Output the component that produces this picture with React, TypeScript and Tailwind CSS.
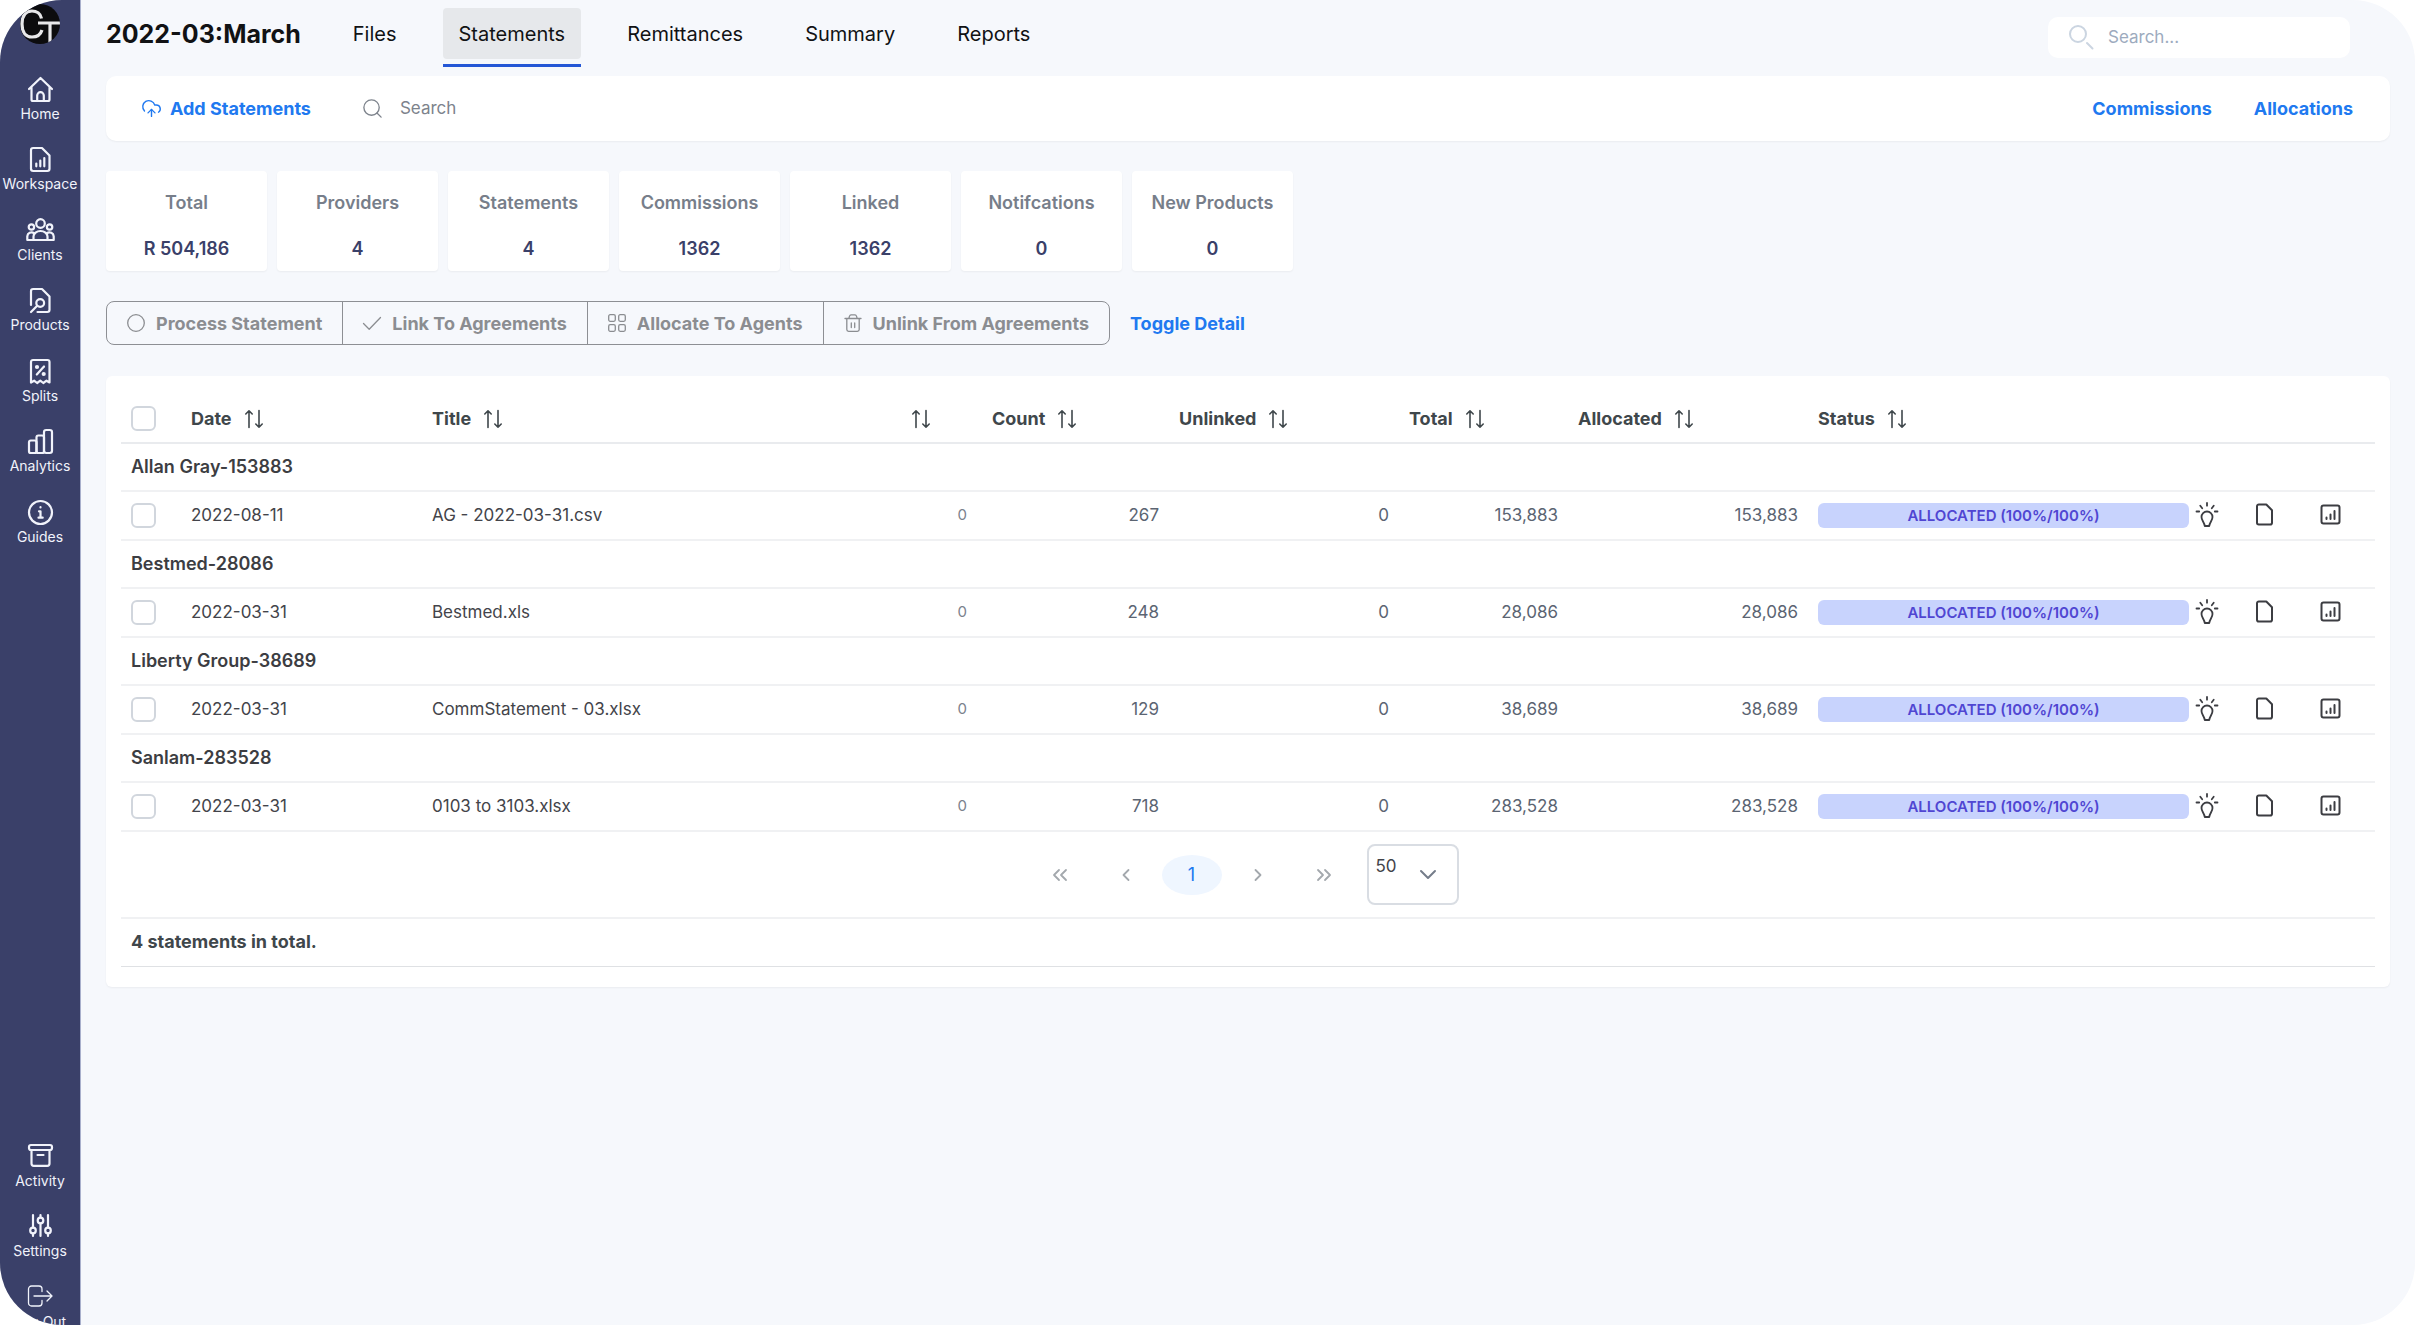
import React from 'react';
import { CloudUpload, Search } from 'lucide-react';

const tabs = ['Files', 'Statements', 'Remittances', 'Summary', 'Reports'];

const stats = [
  { label: 'Total', value: 'R 504,186' },
  { label: 'Providers', value: '4' },
  { label: 'Statements', value: '4' },
  { label: 'Commissions', value: '1362' },
  { label: 'Linked', value: '1362' },
  { label: 'Notifcations', value: '0' },
  { label: 'New Products', value: '0' },
];

const statements = [
  { group: 'Allan Gray-153883', date: '2022-08-11', title: 'AG - 2022-03-31.csv', notes: 0, count: 267, unlinked: 0, total: '153,883' },
  { group: 'Bestmed-28086', date: '2022-03-31', title: 'Bestmed.xls', notes: 0, count: 248, unlinked: 0, total: '28,086' },
  { group: 'Liberty Group-38689', date: '2022-03-31', title: 'CommStatement - 03.xlsx', notes: 0, count: 129, unlinked: 0, total: '38,689' },
  { group: 'Sanlam-283528', date: '2022-03-31', title: '0103 to 3103.xlsx', notes: 0, count: 718, unlinked: 0, total: '283,528' },
];

const Icon: React.FC<{ className: string; box: string; stroke?: number; children: React.ReactNode }> = ({
  className,
  box,
  stroke = 2,
  children,
}) => (
  <svg
    className={`shrink-0 overflow-visible ${className}`}
    viewBox={box}
    fill="none"
    stroke="currentColor"
    strokeWidth={stroke}
    strokeLinecap="round"
    strokeLinejoin="round"
    aria-hidden="true"
  >
    {children}
  </svg>
);

const mainLinks = [
  {
    label: 'Home',
    icon: <path d="M1 12 12.5 1 24 12M3.5 10v12.5a1.5 1.5 0 0 0 1.5 1.5h15a1.5 1.5 0 0 0 1.5-1.5V10M9.2 24v-5.5a3.3 3.3 0 0 1 6.6 0V24" />,
  },
  {
    label: 'Workspace',
    icon: (
      <>
        <path d="M5.2 1H14l7.5 7.5v13.3A2.2 2.2 0 0 1 19.3 24H5.2A2.2 2.2 0 0 1 3 21.8V3.2A2.2 2.2 0 0 1 5.2 1Z" />
        <path d="M8.3 16.5v2.8M12.3 13.5v5.8M16.3 11v8.3" />
      </>
    ),
  },
  {
    label: 'Clients',
    icon: (
      <>
        <circle cx="12.5" cy="5.5" r="4.3" />
        <circle cx="3.4" cy="9" r="2.7" />
        <circle cx="21.6" cy="9" r="2.7" />
        <path d="M5.5 22v-3.5a7 5.5 0 0 1 14 0V22ZM5.5 22h-6.2v-3.6a4.2 4.2 0 0 1 6.7-3.2M19.5 22h6.2v-3.6a4.2 4.2 0 0 0-6.7-3.2" />
      </>
    ),
  },
  {
    label: 'Products',
    icon: (
      <>
        <path d="M3 17V3.2A2.2 2.2 0 0 1 5.2 1H14l7.5 7.5v13.3a2.2 2.2 0 0 1-2.2 2.2H9.5" />
        <circle cx="12.2" cy="15" r="3.9" />
        <path d="M9.2 17.8 3 24" />
      </>
    ),
  },
  {
    label: 'Splits',
    icon: (
      <>
        <path d="M3 23.5V3a2 2 0 0 1 2-2h14.5a2 2 0 0 1 2 2v20.5l-3-1.8-3.2 2.3-3-2.3-3.2 2.3-3-2.3Z" />
        <path d="M16 7.5 8.8 15.5" />
        <circle cx="9" cy="8" r="1" />
        <circle cx="15.7" cy="15" r="1" />
      </>
    ),
  },
  {
    label: 'Analytics',
    icon: (
      <>
        <rect x="1" y="11.5" width="7.5" height="12.5" rx="1.8" />
        <rect x="8.5" y="6.5" width="7.5" height="17.5" rx="1.8" />
        <rect x="16" y="1" width="8" height="23" rx="2.2" />
      </>
    ),
  },
  {
    label: 'Guides',
    icon: (
      <>
        <circle cx="12.5" cy="12.5" r="11.5" />
        <path d="M11 11.3h1.5v6.2M10.5 17.7h4.2M12.5 7.2v.3" />
      </>
    ),
  },
];

const bottomLinks = [
  {
    label: 'Activity',
    stroke: 2.2,
    icon: (
      <>
        <rect x="1" y="1" width="23" height="5" rx="2" />
        <path d="M3.5 6v13.5a2.3 2.3 0 0 0 2.3 2.3h13.4a2.3 2.3 0 0 0 2.3-2.3V6M9.5 11h6" />
      </>
    ),
  },
  {
    label: 'Settings',
    stroke: 2.2,
    icon: (
      <>
        <path d="M5 1v12.5M5 19.5V22M12.5 1v2.3M12.5 9.5V22M20 1v12.5M20 19.5V22" />
        <circle cx="5" cy="16.5" r="2.8" />
        <circle cx="12.5" cy="6.5" r="2.8" />
        <circle cx="20" cy="16.5" r="2.8" />
      </>
    ),
  },
  {
    label: 'Log Out',
    stroke: 1.3,
    icon: <path d="M14 6.5V4a3 3 0 0 0-3-3H3.5a3 3 0 0 0-3 3v14a3 3 0 0 0 3 3H11a3 3 0 0 0 3-3v-2.5M6 11h17.5M19 6l5 5-5 5" />,
  },
];

const SideLink: React.FC<{ label: string; icon: React.ReactNode; stroke?: number }> = ({ label, icon, stroke = 2.2 }) => (
  <a href="#" className="flex-1 flex flex-col items-center gap-[2px]">
    <Icon className="size-[25px]" box="0 0 25 25" stroke={stroke}>
      {icon}
    </Icon>
    <span className="text-[14px] leading-5 whitespace-nowrap">{label}</span>
  </a>
);

const Sidebar: React.FC = () => (
  <aside className="w-[81px] shrink-0 flex flex-col bg-[#3a4069] text-[#f1f3fb] border-r border-[#a9b0cc] pt-1">
    <svg className="size-10 shrink-0 mx-auto" viewBox="0 0 40 40" fill="none" stroke="#e8e8ea" strokeWidth="3.2" role="img" aria-label="CT">
      <clipPath id="badge">
        <circle cx="20" cy="20" r="20" />
      </clipPath>
      <g clipPath="url(#badge)">
        <rect width="40" height="40" fill="#0c0c0e" stroke="none" />
        <path d="M21.5 14.5C20.5 9.500 16.5 7 12 7 5.500 7 2 12 2 20s3.500 13 10 13c4.500 0 8.500-2 10-7" />
        <path d="M18 19h22M30 19v21" />
      </g>
    </svg>
    <nav className="h-[493px] shrink-0 flex flex-col mt-[33px]">
      {mainLinks.map((link) => (
        <SideLink key={link.label} {...link} />
      ))}
    </nav>
    {/* the last entry runs past the bottom edge */}
    <nav className="h-[211px] shrink-0 flex flex-col mt-auto -mb-[30px]">
      {bottomLinks.map((link) => (
        <SideLink key={link.label} {...link} />
      ))}
    </nav>
  </aside>
);

const Header: React.FC = () => (
  <header className="h-[76px] flex items-start justify-between pt-2">
    <div className="flex gap-9">
      <h1 className="text-[25px] leading-[53px] font-bold text-[#111214]">2022-03:March</h1>
      <nav className="flex gap-[30px]">
        {tabs.map((tab) => (
          <a
            key={tab}
            href="#"
            className={`pb-[5px] border-b-[3px] ${tab === 'Statements' ? 'border-[#2457d6]' : 'border-transparent'}`}
          >
            <span
              className={`block h-[51px] px-4 rounded text-[20px] leading-[53px] text-[#111214] ${
                tab === 'Statements' ? 'bg-[#e6e8eb]' : ''
              }`}
            >
              {tab}
            </span>
          </a>
        ))}
      </nav>
    </div>
    <label className="w-[302px] h-[41px] mt-[9px] mr-10 pl-[21px] flex items-center gap-[14px] bg-white rounded-[10px]">
      <Icon className="size-[25px] text-[#cbd5e1]" box="0 0 25 25">
        <circle cx="9" cy="9" r="8" />
        <path d="m18 18 5.5 5.5" />
      </Icon>
      <input
        type="text"
        aria-label="Search everything"
        placeholder="Search..."
        className="w-full min-w-0 text-[17px] outline-none placeholder:text-[#9dabbe]"
      />
    </label>
  </header>
);

const Toolbar: React.FC = () => (
  <div className="h-[65px] pl-[35px] pr-[37px] flex items-center justify-between bg-white rounded-[10px] shadow-xs">
    <div className="flex items-center gap-[50px]">
      <button className="flex items-center gap-2 text-[18px] font-bold text-[#2079f0]">
        <CloudUpload size={21} strokeWidth={1.6} />
        Add Statements
      </button>
      <label className="flex items-center gap-4 text-[#7d838c]">
        <Search size={23} strokeWidth={1.4} />
        <input
          type="text"
          aria-label="Search statements"
          placeholder="Search"
          className="w-60 text-[17px] outline-none placeholder:text-[#7d838c]"
        />
      </label>
    </div>
    <div className="flex gap-[42px] text-[18px] font-bold text-[#2079f0]">
      <a href="#">Commissions</a>
      <a href="#">Allocations</a>
    </div>
  </div>
);

const Stats: React.FC = () => (
  <dl className="flex gap-[10px] mt-[30px]">
    {stats.map((stat) => (
      <div
        key={stat.label}
        className="w-[161px] h-[100px] flex flex-col items-center gap-[22px] pt-5 bg-white rounded shadow-xs text-[18px] leading-6 font-semibold"
      >
        <dt className="text-[#777e8a]">{stat.label}</dt>
        <dd className="text-[#3a4069]">{stat.value}</dd>
      </div>
    ))}
  </dl>
);

const actions = [
  { label: 'Process Statement', icon: <circle cx="9" cy="9" r="8.3" /> },
  { label: 'Link To Agreements', icon: <path d="m.5 9.5 5.7 5.7L17.5 3.5" /> },
  {
    label: 'Allocate To Agents',
    icon: (
      <>
        <rect x=".7" y=".7" width="6.6" height="6.6" rx="1.5" />
        <rect x="10.7" y=".7" width="6.6" height="6.6" rx="1.5" />
        <rect x=".7" y="10.7" width="6.6" height="6.6" rx="1.5" />
        <rect x="10.7" y="10.7" width="6.6" height="6.6" rx="1.5" />
      </>
    ),
  },
  {
    label: 'Unlink From Agreements',
    icon: <path d="M1 4.5h16M2.8 4.5v11a1.8 1.8 0 0 0 1.8 1.8h8.8a1.8 1.8 0 0 0 1.8-1.8v-11M4.8 4.5l.8-2.6A1.5 1.5 0 0 1 7 .8h4a1.5 1.5 0 0 1 1.4 1.1l.8 2.6M7.3 9v4.5M10.7 9v4.5" />,
  },
];

const Actions: React.FC = () => (
  <div className="flex items-center gap-5 mt-[30px]">
    <div className="h-[44px] flex border border-[#8d8f94] rounded-lg divide-x divide-[#8d8f94]">
      {actions.map((action) => (
        <button key={action.label} disabled className="flex items-center gap-[11px] px-5 text-[18px] font-bold text-[#8b8d91]">
          <Icon className="size-[18px]" box="0 0 18 18" stroke={1.3}>
            {action.icon}
          </Icon>
          {action.label}
        </button>
      ))}
    </div>
    <button className="text-[18px] font-bold text-[#2079f0]">Toggle Detail</button>
  </div>
);

const SortIcon: React.FC = () => (
  <Icon className="size-[18px]" box="0 0 18 18" stroke={1.6}>
    <path d="M4 17.5V.8M.8 4 4 .8 7.2 4M14 .5v16.7M10.8 14l3.2 3.2 3.2-3.2" />
  </Icon>
);

const SortHead: React.FC<{ label?: string; className: string }> = ({ label, className }) => (
  <th className={`px-[10px] pt-1 font-bold ${className}`}>
    <button className="flex items-center gap-[13px]" aria-label={label ? undefined : 'Sort by notes'}>
      {label}
      <SortIcon />
    </button>
  </th>
);

const Checkbox: React.FC<{ label: string }> = ({ label }) => (
  <input
    type="checkbox"
    aria-label={label}
    className="block size-[25px] appearance-none bg-white border-2 border-[#d1d6dd] rounded-md"
  />
);

const StatementTable: React.FC = () => (
  <table className="w-full table-fixed text-left">
    <thead>
      <tr className="h-[52px] border-b-2 border-[#e9ebee] text-[18px] text-[#3f474b]">
        <th className="w-[60px] px-[10px] pt-1">
          <Checkbox label="Select all statements" />
        </th>
        <SortHead label="Date" className="w-[241px]" />
        <SortHead label="Title" className="" />
        <SortHead className="w-[80px]" />
        <SortHead label="Count" className="w-[187px]" />
        <SortHead label="Unlinked" className="w-[230px]" />
        <SortHead label="Total" className="w-[169px]" />
        <SortHead label="Allocated" className="w-[240px]" />
        <SortHead label="Status" className="w-[381px]" />
        <th className="w-[57px]" />
        <th className="w-[65px]" />
        <th className="w-[64px]" />
      </tr>
    </thead>
    <tbody className="text-[17px] text-[#5b6472]">
      {statements.map((row) => (
        <React.Fragment key={row.group}>
          <tr className="h-12 border-b-2 border-[#f0f1f3]">
            <th colSpan={12} scope="rowgroup" className="px-[10px] pb-[2px] text-[18px] font-semibold text-[#3c3d42]">
              {row.group}
            </th>
          </tr>
          <tr className="h-[49px] border-b-2 border-[#f0f1f3]">
            <td className="px-[10px]">
              <Checkbox label={`Select ${row.title}`} />
            </td>
            <td className="px-[10px] text-[#43444a]">{row.date}</td>
            <td className="px-[10px] text-[#43444a]">{row.title}</td>
            <td className="pr-[15px] text-right text-[15px] text-[#7b828d]">{row.notes}</td>
            <td className="px-[10px] text-right">{row.count}</td>
            <td className="px-[10px] text-right">{row.unlinked}</td>
            <td className="px-[10px] text-right">{row.total}</td>
            <td className="px-[10px] text-right">{row.total}</td>
            <td className="pl-[10px]">
              <div className="h-[25px] rounded-md bg-[#c8d3fd] text-center text-[15px] leading-[25px] font-semibold text-[#5046d2]">
                ALLOCATED (100%/100%)
              </div>
            </td>
            <td className="pl-[7px] pb-[2px] text-[#3c3d42]">
              <button className="block" aria-label="Insights">
                <Icon className="size-[22px]" box="0 0 22 22" stroke={1.8}>
                  <path d="M11-1v2.7M4.3 1.8l1.9 2.4M17.7 1.8l-1.9 2.4M.5 7.5h2.7M21.5 7.5h-2.7M8.8 22h4.4c.6-4 3.3-5.5 3.3-9a5.5 5.5 0 0 0-11 0c0 3.5 2.7 5 3.3 9Z" />
                </Icon>
              </button>
            </td>
            <td className="pl-[10px] pb-[2px] text-[#3c3d42]">
              <button className="block" aria-label="Open document">
                <Icon className="w-[17px] h-[21px]" box="0 0 17 21" stroke={2}>
                  <path d="M2.8.5h7.5L16 6.3v12.4a1.8 1.8 0 0 1-1.8 1.8H2.8A1.8 1.8 0 0 1 1 18.7V2.3A1.8 1.8 0 0 1 2.8.5Z" />
                </Icon>
              </button>
            </td>
            <td className="pl-[10px] pb-[2px] text-[#3c3d42]">
              <button className="block" aria-label="Open report">
                <Icon className="size-[19px]" box="0 0 19 19" stroke={2}>
                  <rect x="0.5" y="0.5" width="18" height="18" rx="2" />
                  <path d="M5.5 12.5v1.5M9.5 9.5v4.5M13.5 6v8" />
                </Icon>
              </button>
            </td>
          </tr>
        </React.Fragment>
      ))}
    </tbody>
  </table>
);

const PageButton: React.FC<{ label: string; path: string }> = ({ label, path }) => (
  <button aria-label={label} className="w-[60px] h-10 flex justify-center items-center text-[#a3a8ad]">
    <Icon className="w-[14px] h-[12px]" box="0 0 14 12" stroke={1.8}>
      <path d={path} />
    </Icon>
  </button>
);

const Pager: React.FC = () => (
  <div className="h-[87px] pr-2 flex items-center justify-center gap-[6px] border-b-2 border-[#f0f1f3]">
    <PageButton label="First page" path="M6 1 1 6l5 5M13 1 8 6l5 5" />
    <PageButton label="Previous page" path="M9.5 1l-5 5 5 5" />
    <button className="w-[60px] h-10 rounded-[50%] bg-[#eff6ff] text-[18px] text-[#2079f0]">1</button>
    <PageButton label="Next page" path="M4.5 1l5 5-5 5" />
    <PageButton label="Last page" path="M1 1l5 5-5 5M8 1l5 5-5 5" />
    <div className="relative ml-[7px]">
      <select
        aria-label="Rows per page"
        className="block w-[92px] h-[61px] pl-[7px] pb-4 appearance-none bg-white border-2 border-[#d9dde3] rounded-lg text-[17px] text-[#43444a]"
      >
        <option>50</option>
        <option>100</option>
      </select>
      <Icon className="absolute right-[23px] top-[26px] w-4 h-[9px] text-[#757d8a] pointer-events-none" box="0 0 16 9" stroke={2}>
        <path d="m1 1 7 7 7-7" />
      </Icon>
    </div>
  </div>
);

export default function App() {
  return (
    <div className="h-screen flex overflow-hidden rounded-[62px] bg-[#f6f8fc] font-['Inter',sans-serif]">
      <Sidebar />
      <main className="flex-1 min-w-0 px-[25px]">
        <Header />
        <Toolbar />
        <Stats />
        <Actions />
        <section className="mt-[31px] px-[15px] pt-[15px] pb-5 bg-white rounded-md shadow-xs">
          <StatementTable />
          <Pager />
          <p className="h-12 px-[10px] border-b border-[#dfe1e4] text-[18px] leading-[46px] font-bold text-[#3f474b]">
            4 statements in total.
          </p>
        </section>
      </main>
    </div>
  );
}
